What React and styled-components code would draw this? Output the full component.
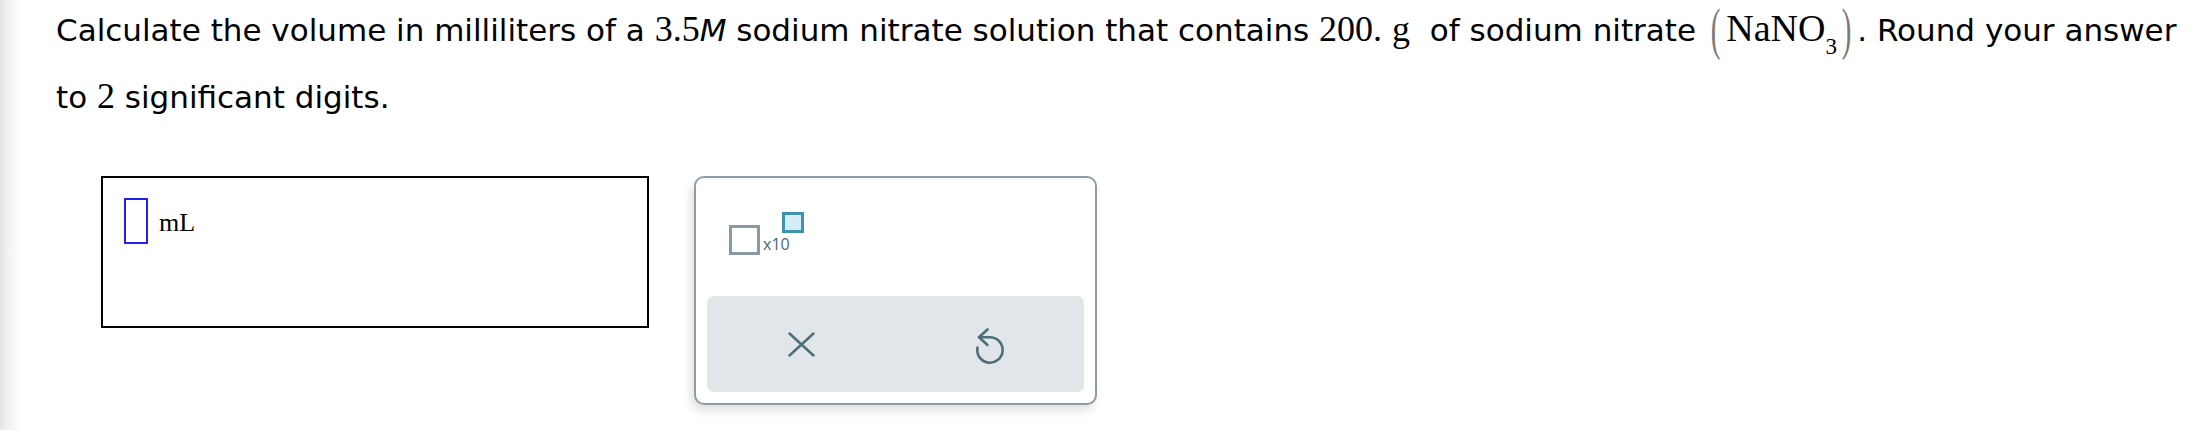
import React from 'react';
import styled, { createGlobalStyle } from 'styled-components';

const GlobalStyle = createGlobalStyle`
	html, body {
		margin: 0;
		padding: 0;
		background: #fff;
	}
`

const Page = styled.div`
	min-height: 430px;
	background: linear-gradient(to right, #e3e3e3 0px, #f3f3f3 9px, #fff 22px);
	overflow: hidden;
`

const Question = styled.div`
	margin-top: -3px;
	padding-left: 56px;
	font-family: "DejaVu Sans", Verdana, sans-serif;
	font-size: 31px;
	line-height: 67px;
	color: #000;
	white-space: nowrap;
`

const Line = styled.div``

const Num = styled.span`
	font-family: "Liberation Serif", "Times New Roman", serif;
	font-size: ${props => props.size || 36}px;
	line-height: 0;
	margin-right: ${props => props.gap || 0}px;
`

const Var = styled.span`
	font-style: italic;
`

const Paren = styled.span`
	display: inline-block;
	font-family: "Liberation Serif", "Times New Roman", serif;
	font-size: 34px;
	line-height: 0;
	color: #7a7a7a;
	transform: scale(0.85, 1.65);
	margin: 0 5px 0 4px;
`

const Sub = styled.span`
	font-size: 23px;
	vertical-align: -13px;
	line-height: 0;
`

const AnswerRow = styled.div`
	display: flex;
	align-items: flex-start;
	gap: 45px;
	margin-top: 45px;
	padding-left: 101px;
`

const AnswerBox = styled.div`
	box-sizing: border-box;
	width: 548px;
	height: 152px;
	border: 2px solid #000;
	padding: 20px 21px;
`

const Entry = styled.div`
	display: flex;
	align-items: center;
	gap: 11px;
`

const Cursor = styled.span`
	box-sizing: border-box;
	width: 24px;
	height: 46px;
	border: 2px solid #2020f0;
`

const Unit = styled.span`
	font-family: "Liberation Serif", "Times New Roman", serif;
	font-size: 26px;
	margin-top: 4px;
	color: #000;
`

const Panel = styled.div`
	box-sizing: border-box;
	width: 403px;
	height: 229px;
	border: 2px solid #8b9ea8;
	border-radius: 10px;
	box-shadow: -3px 6px 10px rgba(0, 0, 0, 0.12);
	padding: 0 11px 11px;
	display: flex;
	flex-direction: column;
	background: #fff;
`

const ExpRow = styled.div`
	box-sizing: border-box;
	height: 118px;
	padding: 34px 0 0 22px;
	display: flex;
	align-items: flex-start;
`

const Sci = styled.div`
	display: flex;
	height: 43px;
`

const Mantissa = styled.span`
	box-sizing: border-box;
	align-self: flex-end;
	width: 31px;
	height: 30px;
	border: 3px solid #8a9aa3;
`

const Times = styled.span`
	align-self: flex-end;
	margin: 0 0 3px 3px;
	font-family: "Open Sans", "Liberation Sans", sans-serif;
	font-size: 16px;
	line-height: 1;
	color: #4c6775;
`

const Exponent = styled.span`
	box-sizing: border-box;
	align-self: flex-start;
	margin-left: -8px;
	width: 22px;
	height: 21px;
	border: 3px solid #3f93ae;
	background: #d5eef5;
`

const ButtonBar = styled.div`
	flex: 1;
	display: grid;
	grid-template-columns: 1fr 1fr;
	background: #e1e6e9;
	border-radius: 7px;
`

const IconButton = styled.button`
	display: flex;
	align-items: center;
	justify-content: center;
	border: none;
	background: transparent;
	padding: 0;
	color: #4e6e7b;
	cursor: pointer;

	svg {
		margin-top: ${props => props.shift || 0}px;
	}
`

const ClearIcon = () => (
	<svg width="27" height="25" viewBox="0 0 27 25" fill="none" stroke="currentColor" strokeWidth="2.5" strokeLinecap="round">
		<path d="M1.5 1.5 L25.5 23.5" />
		<path d="M25.5 1.5 L1.5 23.5" />
	</svg>
)

const UndoIcon = () => (
	<svg width="34" height="38" viewBox="0 0 34 38" fill="none" stroke="currentColor" strokeWidth="2.6" strokeLinecap="round" strokeLinejoin="round">
		<path d="M14.5 2.5 L6 10.3 L14.5 18" />
		<path d="M6 10.3 H17 A12.7 12.7 0 1 1 4.5 20.5" />
	</svg>
)

const App = () => {
	return (
		<Page>
			<GlobalStyle />
			<Question>
				<Line>
					Calculate the volume in milliliters of a <Num>3.5</Num><Var>M</Var> sodium nitrate solution that contains <Num>200.</Num> <Num gap={10}>g</Num> of sodium nitrate <Num size={38}><Paren>(</Paren>NaNO<Sub>3</Sub><Paren>)</Paren></Num>. Round your answer
				</Line>
				<Line>
					to <Num>2</Num> significant digits.
				</Line>
			</Question>
			<AnswerRow>
				<AnswerBox>
					<Entry>
						<Cursor />
						<Unit>mL</Unit>
					</Entry>
				</AnswerBox>
				<Panel>
					<ExpRow>
						<Sci>
							<Mantissa />
							<Times>x10</Times>
							<Exponent />
						</Sci>
					</ExpRow>
					<ButtonBar>
						<IconButton aria-label="clear">
							<ClearIcon />
						</IconButton>
						<IconButton aria-label="undo" shift={4}>
							<UndoIcon />
						</IconButton>
					</ButtonBar>
				</Panel>
			</AnswerRow>
		</Page>
	)
}

export default App;
